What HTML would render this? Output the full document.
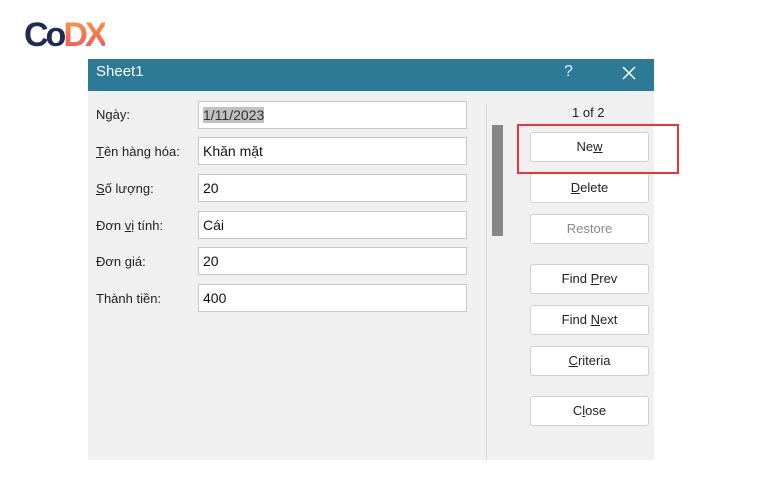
<!DOCTYPE html>
<html><head><meta charset="utf-8"><style>
body{margin:0;width:768px;height:480px;background:#fff;position:relative;overflow:hidden;font-family:"Liberation Sans","DejaVu Sans",sans-serif;}
.a{position:absolute}
.lbl{position:absolute;left:96px;font-size:13px;color:#222}
.inp{position:absolute;left:198px;background:#fff;border:1px solid #c8c8c8;font-size:14px;line-height:26px;padding-left:4px;box-sizing:border-box;width:269px;height:28px;color:#111}
.btn{position:absolute;left:530px;width:119px;height:30px;background:#fff;border:1px solid #d0d0d0;border-radius:3px;box-sizing:border-box;text-align:center;line-height:28px;font-size:13px;color:#222}
</style></head><body>
<div class="a" style="left:24px;top:15px;font-size:34px;font-weight:bold;letter-spacing:-3px;line-height:40px">
<span style="color:#1f2b57">Co</span><span style="background:linear-gradient(180deg,#f7a23a,#ee4a6a);-webkit-background-clip:text;color:transparent">DX</span></div>
<div class="a" style="left:88px;top:59px;width:566px;height:401px;background:#f0f0f0"></div>
<div class="a" style="left:88px;top:59px;width:566px;height:32px;background:#2c7a96"></div>
<div class="a" style="left:96px;top:63px;color:#fff;font-size:15px">Sheet1</div>
<div class="a" style="left:564px;top:63px;color:#e8f0f4;font-size:16px">?</div>
<svg class="a" style="left:622px;top:66px" width="14" height="14"><path d="M1 1L13 13M13 1L1 13" stroke="#fff" stroke-width="1.5"/></svg>
<div class="a" style="left:486px;top:104px;width:1px;height:356px;background:#dcdcdc"></div>
<div class="a" style="left:492px;top:125px;width:11px;height:111px;background:#868686"></div>
<div class="lbl" style="top:107px">Ngày:</div>
<div class="lbl" style="top:144px"><u>T</u>ên hàng hóa:</div>
<div class="lbl" style="top:181px"><u>S</u>ố lượng:</div>
<div class="lbl" style="top:218px">Đơn <u>v</u>ị tính:</div>
<div class="lbl" style="top:254px">Đơn giá:</div>
<div class="lbl" style="top:291px">Thành tiền:</div>
<div class="inp" style="top:101px"><span style="background:#c0c0c0;color:#333">1/11/2023</span></div>
<div class="inp" style="top:137px">Khăn mặt</div>
<div class="inp" style="top:174px">20</div>
<div class="inp" style="top:211px">Cái</div>
<div class="inp" style="top:247px">20</div>
<div class="inp" style="top:284px">400</div>
<div class="a" style="left:572px;top:105px;font-size:13px;color:#222">1 of 2</div>
<div class="btn" style="top:132px">Ne<u>w</u></div>
<div class="btn" style="top:173px"><u>D</u>elete</div>
<div class="btn" style="top:214px;color:#8a8a8a">Restore</div>
<div class="btn" style="top:264px">Find <u>P</u>rev</div>
<div class="btn" style="top:305px">Find <u>N</u>ext</div>
<div class="btn" style="top:346px"><u>C</u>riteria</div>
<div class="btn" style="top:396px">C<u>l</u>ose</div>
<div class="a" style="left:517px;top:124px;width:162px;height:50px;border:2px solid #e8343a;box-sizing:border-box"></div>
</body></html>
